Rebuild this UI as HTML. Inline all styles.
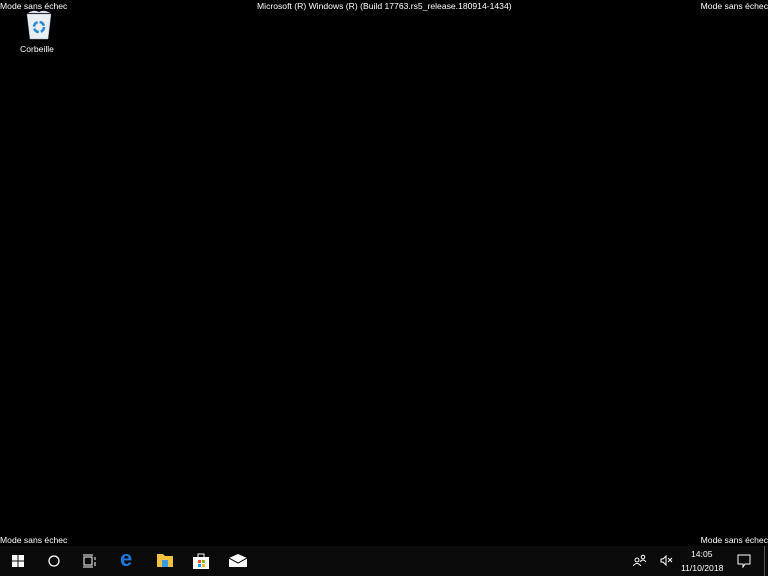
<!DOCTYPE html><html><head><style>
body{margin:0;width:768px;height:576px;background:#000;position:relative;overflow:hidden;font-family:"Liberation Sans",sans-serif;color:#fff;font-size:8.6px}
.t{position:absolute;white-space:nowrap}
#tb{position:absolute;left:0;top:546px;width:768px;height:30px;background:#0a0a0a}
</style></head><body>
<div class="t" style="left:0;top:1px">Mode sans échec</div>
<div class="t" style="left:257px;top:1px">Microsoft (R) Windows (R) (Build 17763.rs5_release.180914-1434)</div>
<div class="t" style="right:0;top:1px">Mode sans échec</div>
<div class="t" style="left:0;top:535px">Mode sans échec</div>
<div class="t" style="right:0;top:535px">Mode sans échec</div>
<svg style="position:absolute;left:24px;top:9px" width="30" height="32"><path d="M3 5 L27 5 L24 30 L6 30 Z" fill="#e8eef2" stroke="#aab" stroke-width=".5"/><path d="M4 4 Q10 0 15 3 Q20 0 26 4" fill="#dde"/><circle cx="15" cy="18" r="5" fill="none" stroke="#2a8ad8" stroke-width="2.5" stroke-dasharray="6 2"/></svg>
<div class="t" style="left:20px;top:44px">Corbeille</div>
<div id="tb">
<svg style="position:absolute;left:12px;top:9px" width="12" height="12"><rect x="0" y="0" width="5.5" height="5.5" fill="#fff"/><rect x="6.5" y="0" width="5.5" height="5.5" fill="#fff"/><rect x="0" y="6.5" width="5.5" height="5.5" fill="#fff"/><rect x="6.5" y="6.5" width="5.5" height="5.5" fill="#fff"/></svg>
<svg style="position:absolute;left:48px;top:9px" width="12" height="12"><circle cx="6" cy="6" r="5" fill="none" stroke="#fff" stroke-width="1.3"/></svg>
<svg style="position:absolute;left:83px;top:8px" width="14" height="14"><rect x="1" y="3" width="8" height="8" fill="none" stroke="#fff"/><path d="M0 1H10M0 13H10M12 3V6M12 8V12" stroke="#fff"/></svg>
<div class="t" style="left:120px;top:0px;font-size:22px;font-weight:bold;color:#1a78d8">e</div>
<svg style="position:absolute;left:157px;top:7px" width="16" height="15"><path d="M0 1H6L8 3H16V14H0Z" fill="#f0c040"/><rect x="5" y="7" width="6" height="7" fill="#3a9ae0"/></svg>
<svg style="position:absolute;left:193px;top:6px" width="16" height="17"><path d="M5 5V2H11V5" fill="none" stroke="#fff"/><rect x="0" y="5" width="16" height="12" fill="#fff"/><rect x="5" y="8" width="3" height="3" fill="#f25022"/><rect x="9" y="8" width="3" height="3" fill="#7fba00"/><rect x="5" y="12" width="3" height="3" fill="#00a4ef"/><rect x="9" y="12" width="3" height="3" fill="#ffb900"/></svg>
<svg style="position:absolute;left:229px;top:8px" width="18" height="13"><path d="M0 4L9 0L18 4V13H0Z" fill="#fff"/><path d="M0 4L9 9L18 4" fill="none" stroke="#000"/></svg>
<svg style="position:absolute;left:633px;top:8px" width="14" height="12"><circle cx="4" cy="6" r="2" fill="none" stroke="#fff"/><path d="M0 12Q4 7 8 12" fill="none" stroke="#fff"/><circle cx="10" cy="3" r="1.8" fill="none" stroke="#fff"/><path d="M7 8Q10 4 13 8" fill="none" stroke="#fff"/></svg>
<svg style="position:absolute;left:660px;top:9px" width="13" height="11"><path d="M1 4H3L6 1V10L3 7H1Z" fill="none" stroke="#fff"/><path d="M8 3L12 7M12 3L8 7" stroke="#fff"/></svg>
<div class="t" style="left:691px;top:3px">14:05</div>
<div class="t" style="left:681px;top:17px">11/10/2018</div>
<svg style="position:absolute;left:737px;top:8px" width="14" height="14"><path d="M1 1H13V10H8L6 13V10H1Z" fill="none" stroke="#fff"/></svg>
<div style="position:absolute;left:764px;top:0;width:1px;height:30px;background:#555"></div>
</div>
</body></html>
